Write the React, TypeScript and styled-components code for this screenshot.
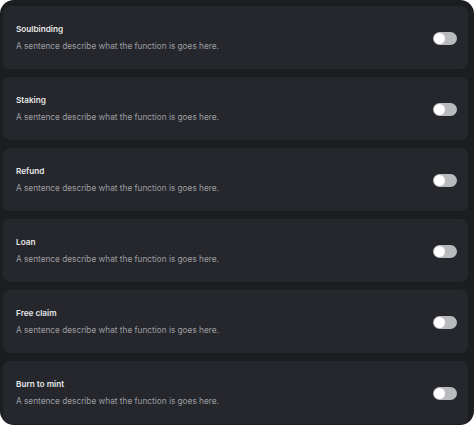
import styled, { createGlobalStyle } from 'styled-components';

const GlobalStyle = createGlobalStyle`
  html, body {
    margin: 0;
    padding: 0;
    background: #ffffff;
  }
  body {
    font-family: Inter, "Noto Sans", sans-serif;
  }
`;

const Panel = styled.div`
  width: 474px;
  height: 425px;
  box-sizing: border-box;
  background-color: #1b1d20;
  border-radius: 14px;
  padding: 6px 6px 0 3px;
  display: flex;
  flex-direction: column;
  gap: 8px;
  overflow: hidden;
`;

const Card = styled.div`
  height: 63px;
  flex-shrink: 0;
  box-sizing: border-box;
  background-color: #25272c;
  border-radius: 7px;
  padding: 0 11px 0 13px;
  display: flex;
  align-items: center;
  justify-content: space-between;
`;

const Texts = styled.div`
  display: flex;
  flex-direction: column;
  gap: 7px;
`;

const Title = styled.h4`
  margin: 0;
  font-size: 8.2px;
  font-weight: 600;
  color: #e6e7e9;
  line-height: 10px;
`;

const Description = styled.p`
  margin: 0;
  font-size: 8.25px;
  font-weight: 400;
  color: #9c9ea3;
  line-height: 10px;
`;

const Toggle = styled.div<{ on: boolean }>`
  width: 24px;
  height: 13px;
  border-radius: 7px;
  background-color: ${(props) => (props.on ? '#4f8cff' : '#b8babe')};
  position: relative;
  flex-shrink: 0;
  margin-top: 1px;
`;

const Knob = styled.span<{ on: boolean }>`
  position: absolute;
  top: 1px;
  left: ${(props) => (props.on ? '12px' : '1px')};
  width: 11px;
  height: 11px;
  border-radius: 50%;
  background-color: #ffffff;
`;

const features = ['Soulbinding', 'Staking', 'Refund', 'Loan', 'Free claim', 'Burn to mint'];

function App() {
  return (
    <>
      <GlobalStyle />
      <Panel>
        {features.map((name) => (
          <Card key={name}>
            <Texts>
              <Title>{name}</Title>
              <Description>A sentence describe what the function is goes here.</Description>
            </Texts>
            <Toggle on={false}>
              <Knob on={false} />
            </Toggle>
          </Card>
        ))}
      </Panel>
    </>
  );
}

export default App;
